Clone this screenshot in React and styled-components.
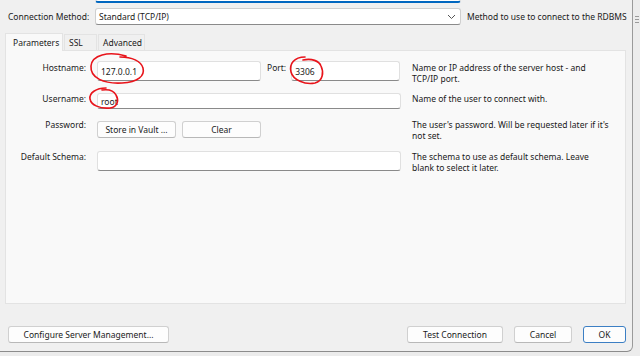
import React from 'react';
import styled, { createGlobalStyle } from 'styled-components';

const Global = createGlobalStyle`
  html, body { margin: 0; padding: 0; background: #e6e6e6; }
  body { font-family: "Noto Sans", "Open Sans", sans-serif; font-size: 8.5px; color: #1a1a1a; }
`;

const Screen = styled.div`
  width: 640px;
  height: 356px;
  overflow: hidden;
  position: relative;
  background: #ececec;
`;

const Window = styled.div`
  width: 633px;
  height: 352px;
  background: #f0f0f0;
  border-right: 1px solid #9a9a9a;
  border-bottom: 1px solid #8c8c8c;
  border-bottom-right-radius: 6px;
  box-sizing: border-box;
  display: flex;
  flex-direction: column;
  position: relative;
`;

const TopGrid = styled.div`
  display: grid;
  grid-template-columns: 87px 366px 1fr;
  margin-top: -14px;
  row-gap: 5px;
  padding-left: 8px;
`;

const TopLabel = styled.div`
  align-self: center;
`;

const TopDesc = styled.div`
  align-self: center;
  padding-left: 6px;
  white-space: nowrap;
`;

const TextBox = styled.div`
  height: ${p => p.$h || 17}px;
  margin-top: ${p => p.$mt || 0}px;
  background: #fff;
  border: 1px solid #e0e0e0;
  border-bottom: ${p => (p.$focus ? '2px solid #0067c0' : '1px solid #8a8a8a')};
  border-radius: 3px;
  box-sizing: border-box;
  display: flex;
  align-items: center;
  padding-left: 3px;
  width: ${p => (p.$w ? p.$w + 'px' : 'auto')};
`;

const Select = styled(TextBox)`
  justify-content: space-between;
  padding-right: 4px;
  border: 1px solid #cfcfcf;
  border-bottom: 1px solid #8a8a8a;
`;

const Tabs = styled.div`
  display: flex;
  align-items: flex-end;
  margin: 7px 0 0 5px;
  height: 18px;
`;

const Tab = styled.div`
  width: ${p => p.$w}px;
  height: ${p => (p.$active ? 18 : 16)}px;
  padding-left: ${p => p.$pl}px;
  box-sizing: border-box;
  display: flex;
  align-items: center;
  background: ${p => (p.$active ? '#f9f9f9' : '#f0f0f0')};
  border: 1px solid #e3e3e3;
  border-bottom: none;
  margin-right: 1px;
  position: relative;
  top: ${p => (p.$active ? 1 : 0)}px;
`;

const Panel = styled.div`
  margin: 0 6px 0 5px;
  height: 254px;
  background: #f9f9f9;
  border: 1px solid #e3e3e3;
  box-sizing: border-box;
  display: grid;
  grid-template-columns: 80px 304px 1fr;
  grid-auto-rows: 30px;
  column-gap: 11px;
  padding-top: 10px;
`;

const FieldLabel = styled.div`
  text-align: right;
  line-height: 11px;
  margin-top: ${p => p.$mt || 0}px;
`;

const Field = styled.div`
  display: flex;
  align-items: flex-start;
  gap: ${p => p.$gap || 0}px;
`;

const Desc = styled.div`
  line-height: 11px;
  margin-top: ${p => p.$mt || 0}px;
  width: 199px;
`;

const PortLabel = styled.div`
  margin: 1px 5px 0 6px;
`;

const Button = styled.button`
  font: inherit;
  color: #1a1a1a;
  height: 17px;
  width: ${p => p.$w}px;
  background: #fdfdfd;
  border: 1px solid ${p => (p.$default ? '#3c7fc4' : '#d0d0d0')};
  border-bottom-color: ${p => (p.$default ? '#3c7fc4' : '#b8b8b8')};
  border-radius: 3px;
  padding: 0;
  margin-left: ${p => p.$ml || 0}px;
`;

const Footer = styled.div`
  display: flex;
  align-items: center;
  margin-top: auto;
  padding: 0 6px 8px 8px;
`;

const Spacer = styled.div`
  flex: 1;
`;

const Marks = styled.svg`
  position: absolute;
  left: 0;
  top: 0;
  pointer-events: none;
`;

const EdgeIcon = styled.div`
  position: absolute;
  left: 635px;
  top: 16px;
  width: 4px;
  height: 7px;
  border-top: 1px solid #9a9a9a;
  border-bottom: 1px solid #9a9a9a;
  box-sizing: border-box;
  &::after {
    content: '';
    display: block;
    margin-top: 2px;
    border-top: 1px solid #9a9a9a;
  }
`;

function Chevron() {
  return (
    <svg width="9" height="6" viewBox="0 0 9 6">
      <path d="M1 1 L4.5 4.5 L8 1" fill="none" stroke="#555" strokeWidth="1" />
    </svg>
  );
}

export default function App() {
  return (
    <Screen>
      <Global />
      <Window>
        <TopGrid>
          <TopLabel>Connection Name:</TopLabel>
          <TextBox $focus $h={17} />
          <TopDesc>Type a name for the connection</TopDesc>
          <TopLabel>Connection Method:</TopLabel>
          <Select $h={17}>
            <span>Standard (TCP/IP)</span>
            <Chevron />
          </Select>
          <TopDesc>Method to use to connect to the RDBMS</TopDesc>
        </TopGrid>

        <Tabs>
          <Tab $active $w={58} $pl={7}>Parameters</Tab>
          <Tab $w={33} $pl={4}>SSL</Tab>
          <Tab $w={47} $pl={4}>Advanced</Tab>
        </Tabs>

        <Panel>
          <FieldLabel $mt={1}>Hostname:</FieldLabel>
          <Field>
            <TextBox $w={164} $h={20}>127.0.0.1</TextBox>
            <PortLabel>Port:</PortLabel>
            <TextBox $w={109} $h={20}>3306</TextBox>
          </Field>
          <Desc $mt={1}>Name or IP address of the server host - and TCP/IP port.</Desc>

          <FieldLabel $mt={2}>Username:</FieldLabel>
          <Field>
            <TextBox $w={304} $h={16} $mt={2}>root</TextBox>
          </Field>
          <Desc $mt={2}>Name of the user to connect with.</Desc>

          <FieldLabel $mt={-2}>Password:</FieldLabel>
          <Field $gap={6}>
            <Button $w={79}>Store in Vault ...</Button>
            <Button $w={79}>Clear</Button>
          </Field>
          <Desc $mt={-2}>The user's password. Will be requested later if it's not set.</Desc>

          <FieldLabel $mt={0}>Default Schema:</FieldLabel>
          <Field>
            <TextBox $w={304} $h={20} />
          </Field>
          <Desc>The schema to use as default schema. Leave blank to select it later.</Desc>
        </Panel>

        <Footer>
          <Button $w={161}>Configure Server Management...</Button>
          <Spacer />
          <Button $w={96}>Test Connection</Button>
          <Button $w={58} $ml={11}>Cancel</Button>
          <Button $w={43} $ml={11} $default>OK</Button>
        </Footer>

        <Marks width="633" height="352" viewBox="0 0 633 352">
          <g fill="none" stroke="#e8141b" strokeWidth="1.6" strokeLinecap="round">
            <path d="M126 56 C108 51 92 55 91 66 C90 78 104 84 122 83 C138 82 145 76 143 68 C141 61 132 57 120 57" />
            <path d="M305 57 C294 57 289 64 291 72 C293 80 305 85 315 83 C323 81 324 72 321 66 C319 61 312 58 303 60" />
            <path d="M106 88 C96 88 89 93 90 99 C91 105 100 109 110 108 C118 107 119 100 116 95 C114 91 109 89 102 90" />
          </g>
        </Marks>
      </Window>
      <EdgeIcon />
    </Screen>
  );
}
